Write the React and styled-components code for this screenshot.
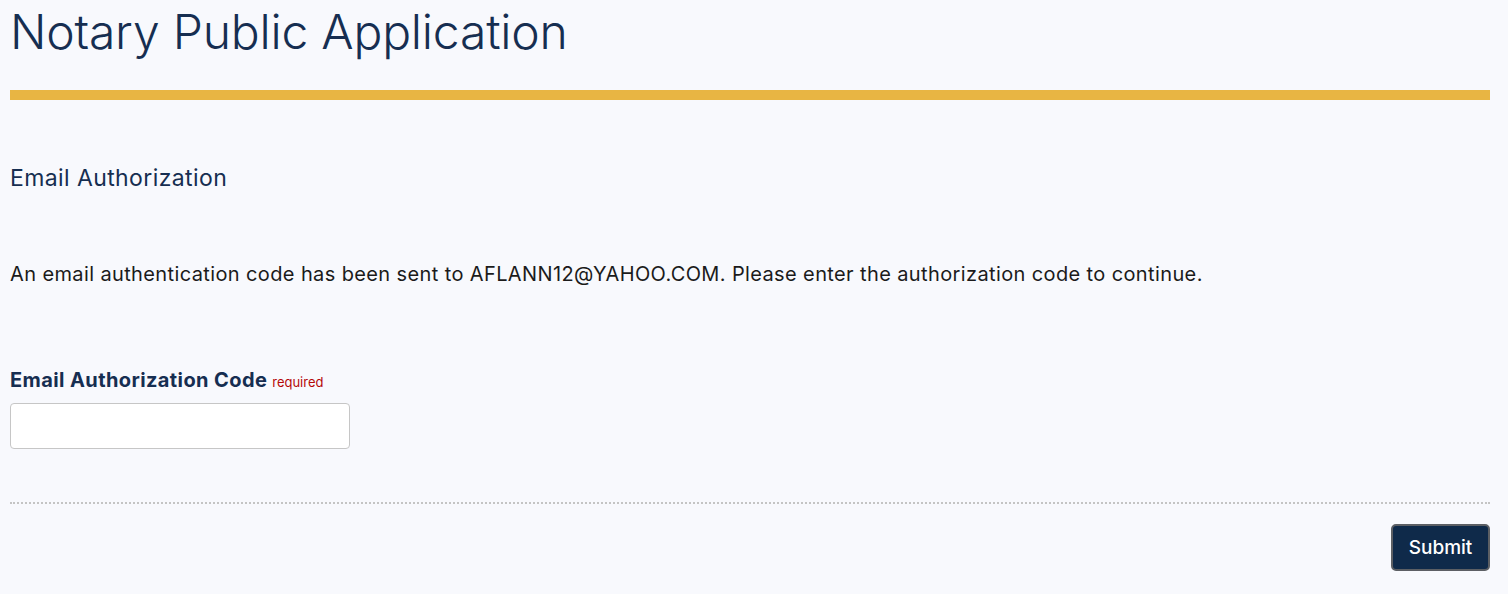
import React, { useState } from "react";
import styled, { createGlobalStyle } from "styled-components";

const GlobalStyle = createGlobalStyle`
  html, body {
    margin: 0;
    padding: 0;
    background: #f8f9fd;
  }
  body {
    font-family: Inter, "Noto Sans", "Liberation Sans", sans-serif;
    color: #1b1b1b;
  }
`;

const Page = styled.main`
  padding: 0 18px 0 10px;
  min-height: 594px;
  box-sizing: border-box;
`;

const Title = styled.h1`
  margin: 0;
  padding-top: 4px;
  font-size: 48px;
  font-weight: 300;
  line-height: 56px;
  color: #162e51;
  letter-spacing: -0.2px;
`;

const Rule = styled.hr`
  margin: 30px 0 0;
  height: 10px;
  border: 0;
  background: #e8b543;
`;

const SectionTitle = styled.h2`
  margin: 64px 0 0;
  font-size: 23px;
  font-weight: 400;
  line-height: 28px;
  letter-spacing: 0.4px;
  color: #162e51;
`;

const Message = styled.p`
  margin: 68px 0 0;
  font-size: 20px;
  line-height: 28px;
  letter-spacing: 0.38px;
  color: #1b1b1b;
`;

const Field = styled.div`
  margin-top: 80px;
  display: flex;
  flex-direction: column;
  gap: 9px;
`;

const Label = styled.label`
  font-size: 20px;
  font-weight: 700;
  line-height: 24px;
  letter-spacing: 0.4px;
  color: #162e51;
`;

const Required = styled.span`
  margin-left: 5px;
  font-size: 13px;
  font-weight: 400;
  letter-spacing: 0;
  color: #b50909;
`;

const Input = styled.input`
  width: 340px;
  height: 46px;
  box-sizing: border-box;
  border: 1px solid #c6c6c6;
  border-radius: 4px;
  background: #fff;
  padding: 0 10px;
  font-size: 18px;
  font-family: inherit;
`;

const Footer = styled.div`
  margin-top: 53px;
  padding-top: 20px;
  border-top: 2px dotted #c4c4c4;
  display: flex;
  justify-content: flex-end;
`;

const SubmitButton = styled.button`
  width: 99px;
  height: 47px;
  box-sizing: border-box;
  background: #0f2a4a;
  color: #fff;
  border: 2px solid #5c5f64;
  border-radius: 5px;
  font-family: inherit;
  font-size: 19px;
  font-weight: 500;
  cursor: pointer;
`;

export default function App() {
  const [code, setCode] = useState("");

  return (
    <>
      <GlobalStyle />
      <Page>
        <Title>Notary Public Application</Title>
        <Rule />
        <SectionTitle>Email Authorization</SectionTitle>
        <Message>
          An email authentication code has been sent to AFLANN12@YAHOO.COM. Please enter the
          authorization code to continue.
        </Message>
        <Field>
          <Label htmlFor="auth-code">
            Email Authorization Code<Required>required</Required>
          </Label>
          <Input id="auth-code" value={code} onChange={(e) => setCode(e.target.value)} />
        </Field>
        <Footer>
          <SubmitButton type="button">Submit</SubmitButton>
        </Footer>
      </Page>
    </>
  );
}
